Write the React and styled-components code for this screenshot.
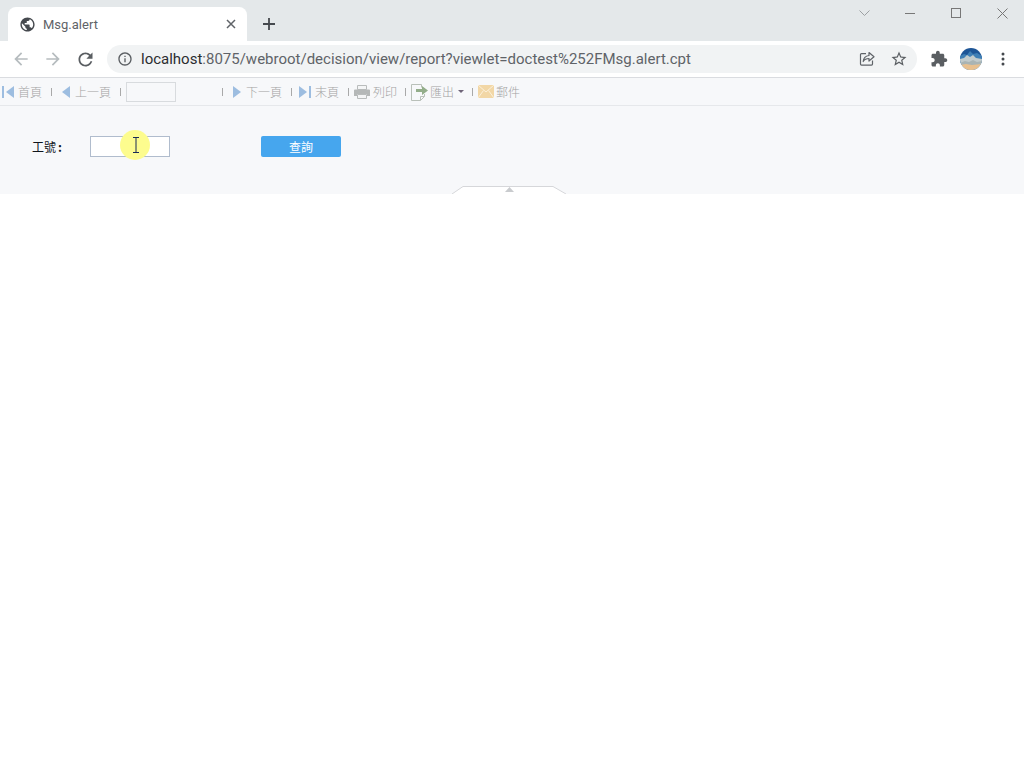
import React from "react";
import styled, { createGlobalStyle } from "styled-components";

const GlobalStyle = createGlobalStyle`
  html, body {
    margin: 0;
    padding: 0;
    background: #fff;
    overflow: hidden;
  }
  body {
    font-family: "Noto Sans CJK TC", "Liberation Sans", sans-serif;
  }
`;

const Page = styled.div`
  width: 1024px;
  height: 768px;
  display: flex;
  flex-direction: column;
  background: #fff;
  overflow: hidden;
`;

/* browser chrome */
const TabStrip = styled.div`
  height: 41px;
  background: #e4e8ea;
  display: flex;
  align-items: flex-end;
  padding-left: 8px;
`;

const Tab = styled.div`
  width: 239px;
  height: 34px;
  box-sizing: border-box;
  background: #fff;
  border-radius: 8px 8px 0 0;
  display: flex;
  align-items: center;
  padding: 0 11px 0 11px;
  position: relative;
`;

const TabTitle = styled.span`
  flex: 1;
  margin-left: 7px;
  font: 13px Roboto, "Liberation Sans", sans-serif;
  color: #5f6368;
`;

const NewTab = styled.div`
  width: 16px;
  height: 16px;
  margin: 0 0 8px 15px;
  display: flex;
`;

const WindowControls = styled.div`
  margin-left: auto;
  margin-right: -1px;
  align-self: flex-start;
  display: flex;
  height: 26px;
  align-items: center;
`;

const WindowButton = styled.div`
  width: 46px;
  height: 26px;
  display: flex;
  align-items: center;
  justify-content: center;
`;

const Toolbar = styled.div`
  height: 37px;
  box-sizing: border-box;
  background: #fff;
  border-bottom: 1px solid #dadce0;
  display: flex;
  align-items: center;
`;

const NavButton = styled.div`
  width: 32px;
  height: 32px;
  display: flex;
  align-items: center;
  justify-content: center;
  flex: none;
  margin-left: ${(p) => p.$ml || 0}px;
`;

const AddressBar = styled.div`
  width: 810px;
  height: 28px;
  margin-left: 6px;
  flex: none;
  background: #f1f3f4;
  border-radius: 14px;
  display: flex;
  align-items: center;
  padding: 0 2px 0 10px;
  box-sizing: border-box;
`;

const Url = styled.span`
  flex: 1;
  margin-left: 8px;
  font: 15px Roboto, "Liberation Sans", sans-serif;
  color: #5f6368;
  white-space: nowrap;
`;

const Host = styled.span`
  color: #2b2d30;
`;

const BarIcon = styled.div`
  width: 32px;
  height: 28px;
  display: flex;
  align-items: center;
  justify-content: center;
`;

/* report toolbar */
const ReportBar = styled.div`
  height: 28px;
  box-sizing: border-box;
  background: #f7f8fa;
  border-bottom: 1px solid #e6e8eb;
  display: flex;
  align-items: center;
  padding-left: 2px;
`;

const ToolIcon = styled.svg`
  flex: none;
  display: block;
  margin-left: ${(p) => p.$ml || 0}px;
`;

const ToolText = styled.span`
  flex: none;
  width: ${(p) => p.$w}px;
  margin-left: ${(p) => p.$ml || 0}px;
  font-size: 12px;
  line-height: 14px;
  font-weight: 300;
  color: #a3a3a3;
  white-space: nowrap;
`;

const Divider = styled.span`
  flex: none;
  width: 1px;
  height: 8px;
  background: #a9a9a9;
  margin-left: ${(p) => p.$ml}px;
`;

const PageInput = styled.div`
  flex: none;
  width: 50px;
  height: 20px;
  box-sizing: border-box;
  margin-left: 5px;
  border: 1px solid #d8dbde;
`;

const Caret = styled.span`
  flex: none;
  width: 0;
  height: 0;
  margin-left: 4px;
  border-left: 3px solid transparent;
  border-right: 3px solid transparent;
  border-top: 3px solid #6f6478;
`;

/* parameter panel */
const ParamPanel = styled.div`
  height: 88px;
  box-sizing: border-box;
  background: #f7f8fa;
  display: flex;
  align-items: flex-start;
  padding: 30px 0 0 32px;
  position: relative;
`;

const ParamLabel = styled.label`
  width: 58px;
  height: 21px;
  line-height: 22px;
  font-size: 12px;
  color: #10151c;
`;

const LabelColon = styled.span`
  margin-left: 2px;
  font-weight: 700;
`;

const ParamInput = styled.div`
  width: 80px;
  height: 21px;
  box-sizing: border-box;
  background: #fff;
  border: 1px solid #b0bccd;
`;

const QueryButton = styled.div`
  width: 80px;
  height: 21px;
  margin-left: 91px;
  border-radius: 2px;
  background: #46a6ee;
  color: #fff;
  font-size: 12px;
  line-height: 22px;
  text-align: center;
`;

const CursorSpot = styled.div`
  position: absolute;
  left: 120px;
  top: 24px;
  width: 30px;
  height: 30px;
  border-radius: 50%;
  background: #fdfc8e;
  display: flex;
  align-items: center;
  justify-content: center;
`;

const IBeam = styled.svg`
  display: block;
  margin-left: 2px;
`;

const CollapseHandle = styled.svg`
  position: absolute;
  left: 451px;
  bottom: 0;
  display: block;
`;

const Blank = styled.div`
  flex: 1;
  background: #fff;
`;

const Mat = ({ d, size = 24, color = "#5f6368" }) => (
  <svg width={size} height={size} viewBox="0 0 24 24" fill={color}>
    <path d={d} />
  </svg>
);

const paths = {
  back: "M20 11H7.83l5.59-5.59L12 4l-8 8 8 8 1.41-1.41L7.83 13H20v-2z",
  forward: "M12 4l-1.41 1.41L16.17 11H4v2h12.17l-5.58 5.59L12 20l8-8z",
  reload:
    "M17.65 6.35C16.2 4.9 14.21 4 12 4c-4.42 0-7.99 3.58-7.99 8s3.57 8 7.99 8c3.73 0 6.84-2.55 7.73-6h-2.08c-.82 2.33-3.04 4-5.65 4-3.31 0-6-2.69-6-6s2.69-6 6-6c1.66 0 3.14.69 4.22 1.78L13 11h7V4l-2.35 2.35z",
  info: "M11 7h2v2h-2zm0 4h2v6h-2zm1-9C6.48 2 2 6.48 2 12s4.48 10 10 10 10-4.48 10-10S17.52 2 12 2zm0 18c-4.41 0-8-3.59-8-8s3.59-8 8-8 8 3.59 8 8-3.59 8-8 8z",
  star: "M22 9.24l-7.19-.62L12 2 9.19 8.63 2 9.24l5.46 4.73L5.82 21 12 17.27 18.18 21l-1.63-7.03L22 9.24zM12 15.4l-3.76 2.27 1-4.28-3.32-2.88 4.38-.38L12 6.1l1.71 4.04 4.38.38-3.32 2.88 1 4.28L12 15.4z",
  puzzle:
    "M20.5 11H19V7c0-1.1-.9-2-2-2h-4V3.5C13 2.12 11.88 1 10.5 1S8 2.12 8 3.5V5H4c-1.1 0-1.99.9-1.99 2v3.8H3.5c1.49 0 2.7 1.21 2.7 2.7s-1.21 2.7-2.7 2.7H2V20c0 1.1.9 2 2 2h3.8v-1.5c0-1.49 1.21-2.7 2.7-2.7 1.49 0 2.7 1.21 2.7 2.7V22H17c1.1 0 2-.9 2-2v-4h1.5c1.38 0 2.5-1.12 2.5-2.5S21.88 11 20.5 11z",
  globe:
    "M12 2C6.48 2 2 6.48 2 12s4.48 10 10 10 10-4.48 10-10S17.52 2 12 2zm-1 17.93c-3.95-.49-7-3.85-7-7.93 0-.62.08-1.21.21-1.79L9 15v1c0 1.1.9 2 2 2v1.93zm6.9-2.54c-.26-.81-1-1.39-1.9-1.39h-1v-3c0-.55-.45-1-1-1H8v-2h2c.55 0 1-.45 1-1V7h2c1.1 0 2-.9 2-2v-.41c2.93 1.19 5 4.06 5 7.41 0 2.08-.8 3.97-2.1 5.39z",
};

const BLUE = "#9dbde0";

// beach photo of the profile button
const Avatar = () => (
  <svg width="22" height="22" viewBox="0 0 22 22">
    <clipPath id="avatarClip">
      <circle cx="11" cy="11" r="11" />
    </clipPath>
    <g clipPath="url(#avatarClip)">
      <rect width="22" height="22" fill="#1d5596" />
      <path d="M0 8l4-2 3 1 3-4 3 3 4-1 5 3v14H0z" fill="#3f7fb5" />
      <path d="M0 11l4-1 3-3 3 2 3-2 3 3 6 1v11H0z" fill="#c2cbcc" />
      <path d="M0 15l5-2 4 1 4-2 4 2 5-1v9H0z" fill="#a9b4b4" />
      <path d="M0 17l6-1 6 1 10-1v6H0z" fill="#e8c08f" />
    </g>
  </svg>
);

const FirstIcon = () => (
  <ToolIcon width="12" height="14" viewBox="0 0 12 14">
    <rect x="0" y="1" width="2" height="12" fill={BLUE} />
    <path d="M12 1v12L4 7z" fill={BLUE} />
  </ToolIcon>
);

const PrevIcon = () => (
  <ToolIcon $ml={9} width="9" height="14" viewBox="0 0 9 14">
    <path d="M9 1v12L1 7z" fill={BLUE} />
  </ToolIcon>
);

const NextIcon = () => (
  <ToolIcon $ml={9} width="10" height="14" viewBox="0 0 10 14">
    <path d="M1 1v12l8-6z" fill={BLUE} />
  </ToolIcon>
);

const LastIcon = () => (
  <ToolIcon $ml={7} width="12" height="14" viewBox="0 0 12 14">
    <path d="M0 1v12l8-6z" fill={BLUE} />
    <rect x="10" y="1" width="2" height="12" fill={BLUE} />
  </ToolIcon>
);

const PrintIcon = () => (
  <ToolIcon $ml={5} width="16" height="14" viewBox="0 0 16 14">
    <path d="M3.5.5h9v4h-9z" fill="#f4f5f6" stroke="#b9bcbc" />
    <path d="M1 4.500h14a1 1 0 0 1 1 1V11h-3V9H3v2H0V5.500a1 1 0 0 1 1-1z" fill="#b5b8b8" />
    <path d="M3.500 9.500h9v4h-9z" fill="#f4f5f6" stroke="#b9bcbc" />
  </ToolIcon>
);

const ExportIcon = () => (
  <ToolIcon $ml={5} width="17" height="18" viewBox="0 0 17 18">
    <path d="M.5 1.500h10v3M13.500 11v2.500l-4 4h-9v-16" fill="none" stroke="#b9c0b9" />
    <path d="M9.500 17.500v-4h4" fill="none" stroke="#b9c0b9" />
    <path d="M5 6h6V3l6 4.500L11 12V9H5z" fill="#93ad8a" />
  </ToolIcon>
);

const MailIcon = () => (
  <ToolIcon $ml={5} width="16" height="13" viewBox="0 0 16 13">
    <rect width="16" height="13" fill="#f2d7a6" />
    <path d="M0 0l8 7 8-7M0 13l5.500-7.500M16 13l-5.500-7.500" fill="none" stroke="#fbf0db" />
  </ToolIcon>
);

const App = () => (
  <>
    <GlobalStyle />
    <Page>
      <TabStrip>
        <Tab>
          <Mat d={paths.globe} size={17} color="#45494e" />
          <TabTitle>Msg.alert</TabTitle>
          <svg width="10" height="10" viewBox="0 0 10 10">
            <path d="M1 1l8 8M9 1l-8 8" stroke="#5f6368" strokeWidth="1.500" />
          </svg>
        </Tab>
        <NewTab>
          <svg width="14" height="14" viewBox="0 0 14 14">
            <path d="M7 1v12M1 7h12" stroke="#45494e" strokeWidth="1.800" />
          </svg>
        </NewTab>
        <WindowControls>
          <WindowButton>
            <svg width="11" height="7" viewBox="0 0 11 7">
              <path d="M.5.500l5 5 5-5" fill="none" stroke="#9ca0a3" />
            </svg>
          </WindowButton>
          <WindowButton>
            <svg width="10" height="1" viewBox="0 0 10 1">
              <rect width="10" height="1" fill="#777" />
            </svg>
          </WindowButton>
          <WindowButton>
            <svg width="10" height="10" viewBox="0 0 10 10">
              <rect x=".5" y=".5" width="9" height="9" fill="none" stroke="#777" />
            </svg>
          </WindowButton>
          <WindowButton>
            <svg width="11" height="11" viewBox="0 0 11 11">
              <path d="M.5.500l10 10M10.500.500l-10 10" stroke="#777" />
            </svg>
          </WindowButton>
        </WindowControls>
      </TabStrip>

      <Toolbar>
        <NavButton $ml={5}>
          <Mat d={paths.back} size={20} color="#b6bcbf" />
        </NavButton>
        <NavButton>
          <Mat d={paths.forward} size={20} color="#b6bcbf" />
        </NavButton>
        <NavButton>
          <Mat d={paths.reload} size={21} color="#5a5e62" />
        </NavButton>
        <AddressBar>
          <Mat d={paths.info} size={16} color="#5a5e62" />
          <Url>
            <Host>localhost</Host>:8075/webroot/decision/view/report?viewlet=doctest%252FMsg.alert.cpt
          </Url>
          <BarIcon>
            <svg width="16" height="16" viewBox="0 0 16 16" fill="none" stroke="#5f6368" strokeWidth="1.200">
              <path d="M7 2.600H2.500a1 1 0 0 0-1 1v9.500a1 1 0 0 0 1 1h10a1 1 0 0 0 1-1V9.500" />
              <path d="M10 1.500l5 4.300-5 4.200V7.500c-2.800 0-4.500.8-5.800 3 .3-3.500 2.300-5.600 5.800-6z" strokeLinejoin="round" />
            </svg>
          </BarIcon>
          <BarIcon>
            <Mat d={paths.star} size={18} color="#5a5e62" />
          </BarIcon>
        </AddressBar>
        <NavButton $ml={6}>
          <Mat d={paths.puzzle} size={18} color="#5a5e62" />
        </NavButton>
        <NavButton>
          <Avatar />
        </NavButton>
        <NavButton>
          <svg width="4" height="14" viewBox="0 0 4 14" fill="#45494e">
            <circle cx="2" cy="2" r="1.500" />
            <circle cx="2" cy="7" r="1.500" />
            <circle cx="2" cy="12" r="1.500" />
          </svg>
        </NavButton>
      </Toolbar>

      <ReportBar>
        <FirstIcon />
        <ToolText $ml={4} $w={24}>首頁</ToolText>
        <Divider $ml={9} />
        <PrevIcon />
        <ToolText $ml={5} $w={36}>上一頁</ToolText>
        <Divider $ml={9} />
        <PageInput />
        <Divider $ml={46} />
        <NextIcon />
        <ToolText $ml={4} $w={36}>下一頁</ToolText>
        <Divider $ml={9} />
        <LastIcon />
        <ToolText $ml={4} $w={24}>末頁</ToolText>
        <Divider $ml={9} />
        <PrintIcon />
        <ToolText $ml={3} $w={24}>列印</ToolText>
        <Divider $ml={8} />
        <ExportIcon />
        <ToolText $ml={2} $w={24}>匯出</ToolText>
        <Caret />
        <Divider $ml={8} />
        <MailIcon />
        <ToolText $ml={2} $w={24}>郵件</ToolText>
      </ReportBar>

      <ParamPanel>
        <ParamLabel>
          工號<LabelColon>:</LabelColon>
        </ParamLabel>
        <ParamInput />
        <QueryButton>查詢</QueryButton>
        <CursorSpot>
          <IBeam width="8" height="16" viewBox="0 0 8 16" fill="none" stroke="#1a2a55">
            <path d="M1 .5h6M1 15.500h6M4 .5v15" />
          </IBeam>
        </CursorSpot>
        <CollapseHandle width="116" height="8" viewBox="0 0 116 8">
          <path d="M1 8L12 .5h90L115 8" fill="#fff" stroke="#d6d7da" />
          <path d="M54 6l4.500-5 4.500 5z" fill="#c9cbce" />
        </CollapseHandle>
      </ParamPanel>
      <Blank />
    </Page>
  </>
);

export default App;
